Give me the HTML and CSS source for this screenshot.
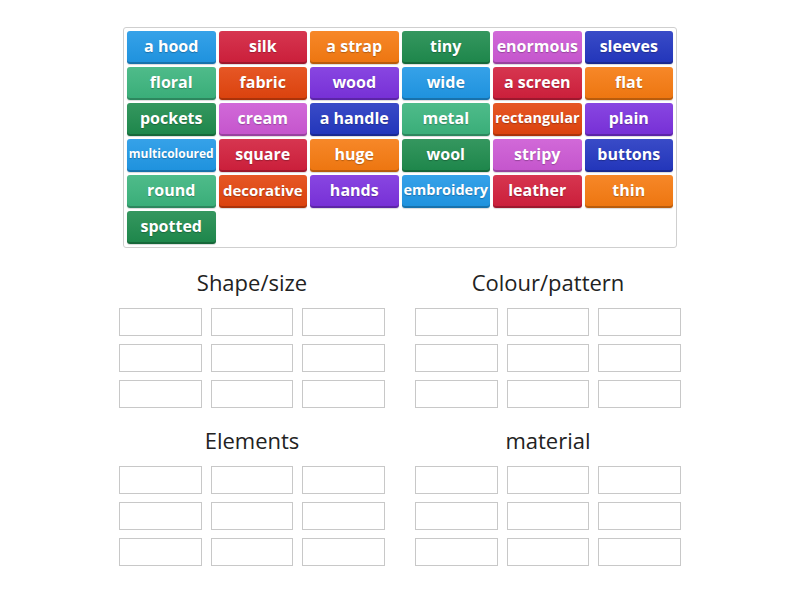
FILE: index.html
```html
<!DOCTYPE html>
<html lang="en">

<head>
  <meta charset="UTF-8">
  <meta name="viewport" content="width=device-width, initial-scale=1.0">
  <title>Group sort</title>
  <link rel="stylesheet" href="styles.css">
</head>

<body>
  <main>
    <!-- word bank -->
    <div class="bank">
      <div class="tile blue">a hood</div>
      <div class="tile red">silk</div>
      <div class="tile orange">a strap</div>
      <div class="tile dkgreen">tiny</div>
      <div class="tile magenta">enormous</div>
      <div class="tile navy">sleeves</div>
      <div class="tile green">floral</div>
      <div class="tile orangered">fabric</div>
      <div class="tile purple">wood</div>
      <div class="tile blue">wide</div>
      <div class="tile red">a screen</div>
      <div class="tile orange">flat</div>
      <div class="tile dkgreen">pockets</div>
      <div class="tile magenta">cream</div>
      <div class="tile navy">a handle</div>
      <div class="tile green">metal</div>
      <div class="tile orangered fit-sm">rectangular</div>
      <div class="tile purple">plain</div>
      <div class="tile blue fit-xs">multicoloured</div>
      <div class="tile red">square</div>
      <div class="tile orange">huge</div>
      <div class="tile dkgreen">wool</div>
      <div class="tile magenta">stripy</div>
      <div class="tile navy">buttons</div>
      <div class="tile green">round</div>
      <div class="tile orangered fit-md">decorative</div>
      <div class="tile purple">hands</div>
      <div class="tile blue fit-sm">embroidery</div>
      <div class="tile red">leather</div>
      <div class="tile orange">thin</div>
      <div class="tile dkgreen">spotted</div>
    </div>

    <!-- drop targets -->
    <div class="groups">
      <section class="group">
        <h2>Shape/size</h2>
        <div class="slots">
          <div class="slot"></div><div class="slot"></div><div class="slot"></div>
          <div class="slot"></div><div class="slot"></div><div class="slot"></div>
          <div class="slot"></div><div class="slot"></div><div class="slot"></div>
        </div>
      </section>
      <section class="group">
        <h2>Colour/pattern</h2>
        <div class="slots">
          <div class="slot"></div><div class="slot"></div><div class="slot"></div>
          <div class="slot"></div><div class="slot"></div><div class="slot"></div>
          <div class="slot"></div><div class="slot"></div><div class="slot"></div>
        </div>
      </section>
      <section class="group">
        <h2>Elements</h2>
        <div class="slots">
          <div class="slot"></div><div class="slot"></div><div class="slot"></div>
          <div class="slot"></div><div class="slot"></div><div class="slot"></div>
          <div class="slot"></div><div class="slot"></div><div class="slot"></div>
        </div>
      </section>
      <section class="group">
        <h2>material</h2>
        <div class="slots">
          <div class="slot"></div><div class="slot"></div><div class="slot"></div>
          <div class="slot"></div><div class="slot"></div><div class="slot"></div>
          <div class="slot"></div><div class="slot"></div><div class="slot"></div>
        </div>
      </section>
    </div>
  </main>
</body>

</html>
```

FILE: styles.css
```css
body {
  margin: 0;
  padding: 0;
  background: #fff;
  font-family: "Open Sans", "DejaVu Sans", sans-serif;
  color: #222;
}

main {
  width: 562px;
  margin: 0 auto;
  padding-top: 27px;
}

.bank {
  width: 546px;
  margin: 0 auto;
  padding: 3px;
  border: 1px solid #cfcfcf;
  border-radius: 3px;
  display: grid;
  grid-template-columns: repeat(6, 1fr);
  grid-auto-rows: 33px;
  gap: 3px;
}

.tile {
  display: flex;
  align-items: center;
  justify-content: center;
  padding-bottom: 4px;
  box-sizing: border-box;
  border-radius: 3px;
  color: #fff;
  font-weight: bold;
  font-size: 16px;
  white-space: nowrap;
  text-shadow: 0 1px 1px rgba(0, 0, 0, 0.25);
  background-image: linear-gradient(rgba(255, 255, 255, 0.1), rgba(0, 0, 0, 0.04));
  box-shadow: inset 0 -2px 0 rgba(0, 0, 0, 0.22), 0 1px 1px rgba(0, 0, 0, 0.15);
}

/* shrink long words so they stay on one line */
.fit-md { font-size: 15px; }
.fit-sm { font-size: 14.5px; }
.fit-xs { font-size: 12px; }

.blue { background-color: #1f97e6; }
.red { background-color: #d21f3c; }
.orange { background-color: #f67a10; }
.dkgreen { background-color: #1e8b4d; }
.magenta { background-color: #cc58d4; }
.navy { background-color: #2337c1; }
.green { background-color: #3bb47d; }
.orangered { background-color: #e3440d; }
.purple { background-color: #7b31de; }

.groups {
  display: grid;
  grid-template-columns: 266px 266px;
  column-gap: 30px;
  row-gap: 17px;
  margin-top: 19px;
}

h2 {
  margin: 0 0 11px;
  height: 30px;
  line-height: 30px;
  font-size: 22px;
  font-weight: normal;
  text-align: center;
  color: #222;
}

.slots {
  display: grid;
  grid-template-columns: repeat(3, 1fr);
  grid-auto-rows: 28px;
  gap: 8px 9px;
}

.slot {
  border: 1px solid #c8c8c8;
  box-sizing: border-box;
}
```
